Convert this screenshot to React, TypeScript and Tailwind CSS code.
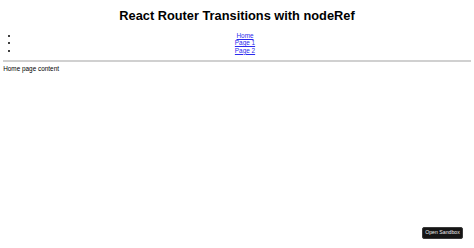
import React from "react";

export default function App() {
  return (
    <div
      className="relative h-[248px] w-full overflow-hidden bg-white px-[3.2px] pt-[8.6px] text-black"
      style={{ fontFamily: '"Liberation Sans", Arial, sans-serif' }}
    >
      <h1 className="text-center text-[12.8px] font-bold leading-[14.7px]">
        React Router Transitions with nodeRef
      </h1>
      <ul className="mt-[8.6px] mb-[6.4px] list-disc pl-[16px] text-center text-[6.4px] leading-[7.37px]">
        <li>
          <a href="#" className="text-[#2a2aee] underline">
            Home
          </a>
        </li>
        <li>
          <a href="#" className="text-[#2a2aee] underline">
            Page 1
          </a>
        </li>
        <li>
          <a href="#" className="text-[#2a2aee] underline">
            Page 2
          </a>
        </li>
      </ul>
      <hr className="h-[2px] border-0 bg-[#d0d0d0]" />
      <div className="mt-[3px] text-[6.4px] leading-[7.37px]">Home page content</div>
      <button className="absolute right-[11px] bottom-[9px] flex h-[12px] w-[41px] items-center justify-center rounded-[2px] border border-[#3a3a3a] bg-[#151515] text-[5.2px] leading-none text-[#eeeeee]">
        Open Sandbox
      </button>
    </div>
  );
}
